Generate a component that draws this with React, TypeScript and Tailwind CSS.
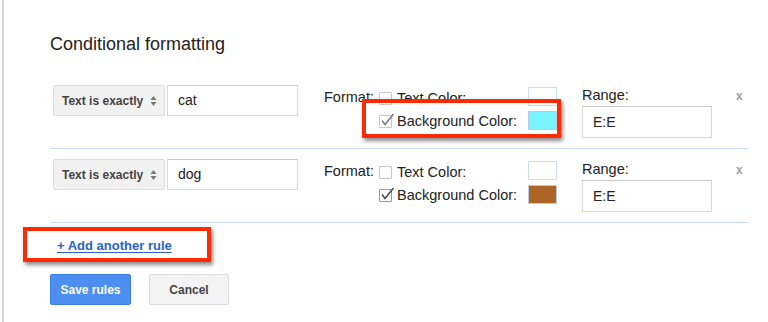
import React from 'react';

interface Rule {
  id: string;
  condition: string;
  value: string;
  textColor: boolean;
  bgColor: boolean;
  bg: string;
  range: string;
  focused: boolean;
}

const rules: Rule[] = [
  { id: '1', condition: 'Text is exactly', value: 'cat', textColor: false, bgColor: true, bg: 'bg-[#7af4fd]', range: 'E:E', focused: false },
  { id: '2', condition: 'Text is exactly', value: 'dog', textColor: false, bgColor: true, bg: 'bg-[#ad6424]', range: 'E:E', focused: true },
];

const Checkbox: React.FC<{ checked: boolean; focused?: boolean }> = ({ checked, focused }) => (
  <span
    className={`relative inline-block w-[13px] h-[13px] shrink-0 bg-white border rounded-[1px] ${
      focused ? 'border-[#6d9eeb]' : 'border-[#c6c6c6]'
    }`}
  >
    {checked && (
      <svg className="absolute -top-[4px] left-[0px]" width="15" height="15" viewBox="0 0 15 15">
        <path
          d="M2 8.5 L5 12.5 L13.5 2"
          fill="none"
          stroke={focused ? '#444' : '#777'}
          strokeWidth="1.4"
        />
      </svg>
    )}
  </span>
);

const SelectArrows = () => (
  <svg width="7" height="12" viewBox="0 0 7 12">
    <path d="M0.5 5 L3.5 1 L6.5 5 Z" fill="#777" />
    <path d="M0.5 7 L3.5 11 L6.5 7 Z" fill="#777" />
  </svg>
);

const RuleRow: React.FC<{ rule: Rule }> = ({ rule }) => (
  <div className="flex items-start h-[74px] pt-[10px] border-b border-[#c9dcf7] w-[698px]">
    {/* condition + value */}
    <div className="ml-[3px] w-[112px] h-[31px] flex items-center justify-between pl-[8px] pr-[7px] bg-[#f1f1f1] border border-[#dcdcdc] rounded-[2px]">
      <span className="text-[12px] font-bold text-[#444]">{rule.condition}</span>
      <SelectArrows />
    </div>
    <div className="ml-[2px] w-[131px] h-[31px] flex items-center pl-[10px] bg-white border border-[#d9d9d9] border-t-[#c8c8c8]">
      <span className="text-[14px] text-[#222]">{rule.value}</span>
    </div>

    {/* format */}
    <div className="ml-[26px] mt-[2px] flex">
      <div className="w-[55px] h-[19px] flex items-center pt-[3px] text-[14.5px] text-[#222]">Format:</div>
      <div className="flex flex-col gap-[5px]">
        <div className="flex h-[19px] items-center">
          <div className="w-[149px] flex items-center gap-[5px] pt-[4px]">
            <Checkbox checked={rule.textColor} />
            <span className="text-[14.5px] text-[#222]">Text Color:</span>
          </div>
          <span className="w-[29px] h-[19px] bg-white border border-[#c9dcf7]" />
        </div>
        <div className="flex h-[19px] items-center">
          <div className="w-[149px] flex items-center gap-[5px] pt-[2px]">
            <Checkbox checked={rule.bgColor} focused={rule.focused} />
            <span className="text-[14.5px] text-[#222]">Background Color:</span>
          </div>
          <span className={`w-[29px] h-[19px] border border-[#b9cde6] ${rule.bg}`} />
        </div>
      </div>
    </div>

    {/* range */}
    <div className="ml-[25px] flex flex-col">
      <div className="h-[21px] flex items-center text-[14.5px] text-[#222]">Range:</div>
      <div className="w-[130px] h-[32px] flex items-center pl-[10px] bg-white border border-[#d9d9d9] border-t-[#c8c8c8]">
        <span className="text-[14px] text-[#222]">{rule.range}</span>
      </div>
    </div>

    <div className="ml-[24px] h-[22px] flex items-center text-[12px] font-bold text-[#a0a0a0]">x</div>
  </div>
);

const App: React.FC = () => {
  return (
    <div
      className="relative w-[768px] h-[322px] overflow-hidden bg-white"
      style={{ fontFamily: '"Liberation Sans", Arial, sans-serif' }}
    >
      <div className="ml-[2px] h-full border-l-2 border-[#d6d6d6] pl-[46px]">
        <h1 className="pt-[34px] text-[18px] leading-[20px] text-[#222] font-normal">Conditional formatting</h1>

        <div className="mt-[21px]">
          {rules.map((rule) => (
            <RuleRow key={rule.id} rule={rule} />
          ))}
        </div>

        <div className="mt-[13px] ml-[7px] h-[20px] flex items-center">
          <a className="text-[13px] font-bold text-[#2a62c9] underline underline-offset-2 cursor-pointer">
            + Add another rule
          </a>
        </div>

        <div className="mt-[18px] flex gap-[18px]">
          <button className="w-[81px] h-[31px] rounded-[2px] bg-[#4d8ff0] border border-[#3d7fe6] text-white text-[12px] font-bold">
            Save rules
          </button>
          <button className="w-[80px] h-[31px] rounded-[2px] bg-[#f3f3f3] border border-[#dcdcdc] text-[#444] text-[12px] font-bold">
            Cancel
          </button>
        </div>
      </div>

      {/* annotation highlights */}
      <div className="absolute left-[362px] top-[99px] w-[199px] h-[39px] border-[4px] border-[#fd2a02] shadow-[2px_3px_4px_rgba(0,0,0,0.45)] pointer-events-none" />
      <div className="absolute left-[23px] top-[227px] w-[188px] h-[35px] border-[4px] border-[#fd2a02] shadow-[2px_3px_4px_rgba(0,0,0,0.45)] pointer-events-none" />
    </div>
  );
};

export default App;
